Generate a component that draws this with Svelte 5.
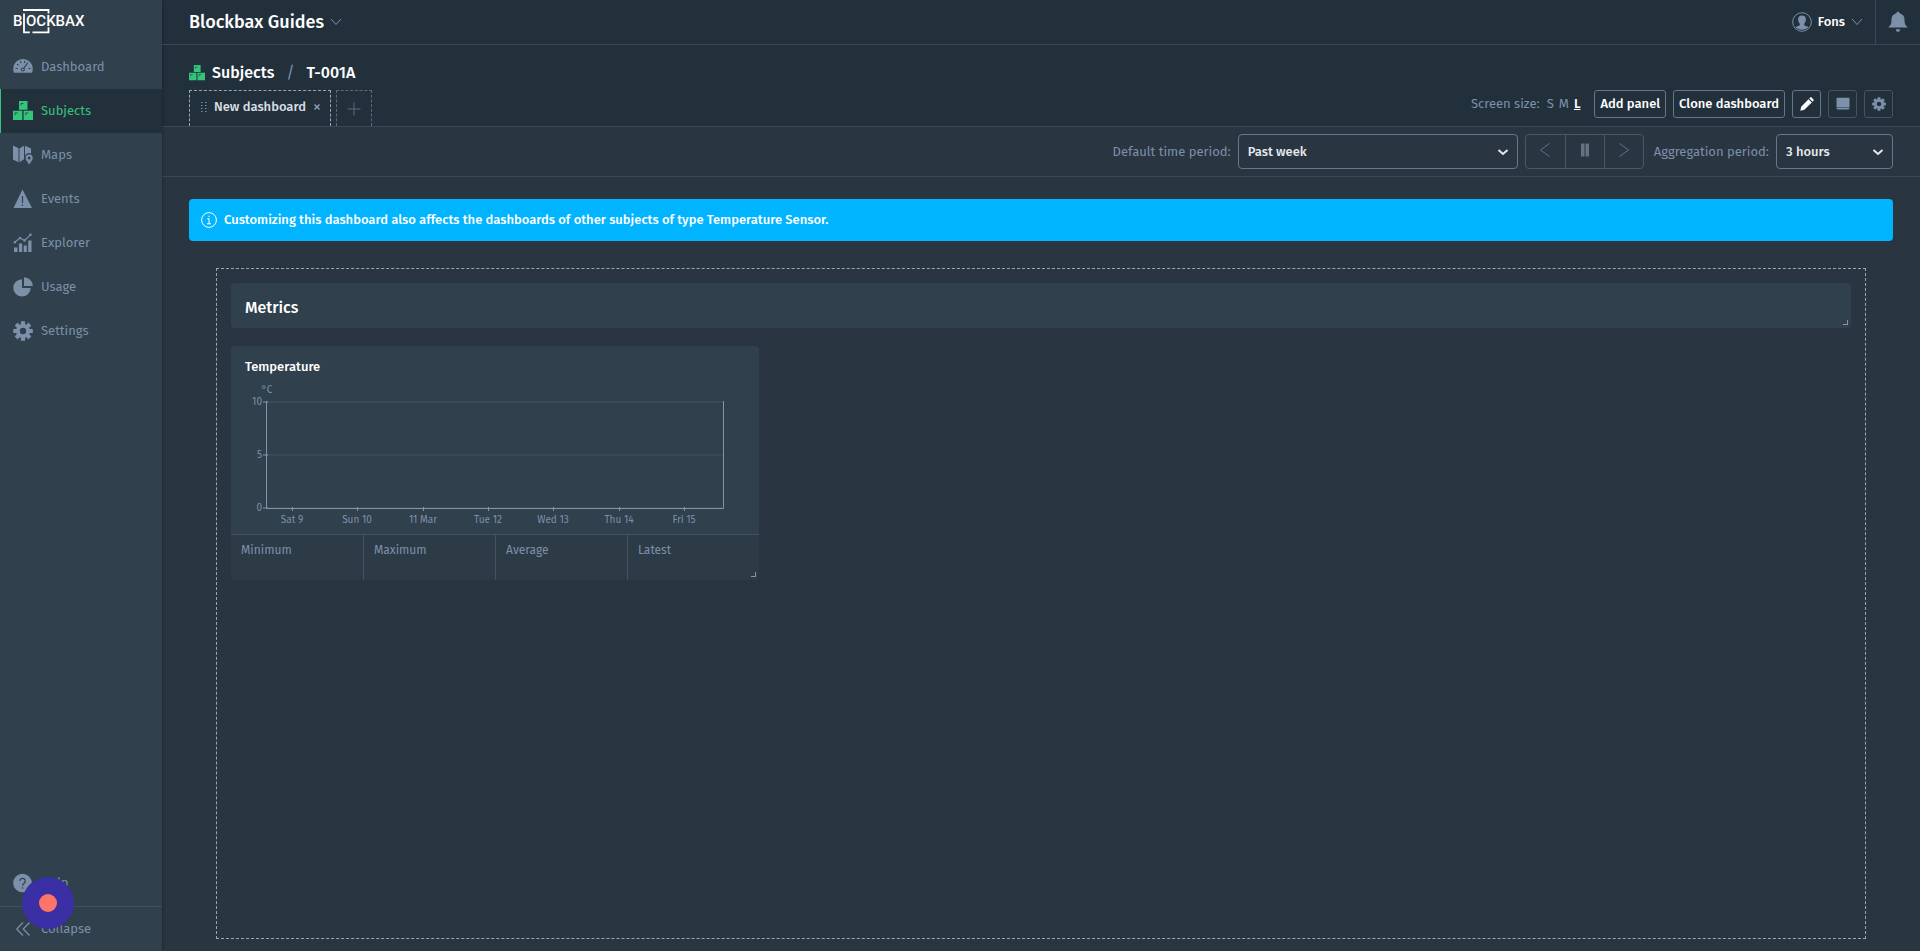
<script>
  const nav = [
    { id: 'dashboard', label: 'Dashboard' },
    { id: 'subjects', label: 'Subjects' },
    { id: 'maps', label: 'Maps' },
    { id: 'events', label: 'Events' },
    { id: 'explorer', label: 'Explorer' },
    { id: 'usage', label: 'Usage' },
    { id: 'settings', label: 'Settings' }
  ];
  const sizes = ['S', 'M', 'L'];
  const stats = ['Minimum', 'Maximum', 'Average', 'Latest'];
  const days = ['Sat 9', 'Sun 10', '11 Mar', 'Tue 12', 'Wed 13', 'Thu 14', 'Fri 15'];
  const levels = [10, 5, 0];

  let active = $state('subjects');
  let size = $state('L');

  const dayX = (i) => Math.round(61 + i * 65.3);
  const levelY = (v) => 127 - v * 10.6;
</script>

{#snippet icon(name)}
  <svg class="icon" viewBox="0 0 20 20" aria-hidden="true">
    {#if name === 'dashboard'}
      <path fill="currentColor" d="M10 2A9.800 9.800 0 0 0 .2 11.800c0 1.400.2 2.700.7 4h18.200c.5-1.300.7-2.600.7-4A9.800 9.800 0 0 0 10 2z" />
      <path d="M2.600 11.500h2M4 7.300l1.600 1M7.300 4.300l.8 1.700M11.800 4l-.4 1.800M17.500 11.500h-2M14.800 5.600L10.300 12" fill="none" stroke="#30404c" stroke-width="1.100" />
      <circle cx="9.800" cy="12.500" r="2" fill="#30404c" />
      <circle cx="9.800" cy="12.500" r="1" fill="currentColor" />
    {:else if name === 'subjects'}
      <path fill="currentColor" d="M6 0h8.500v8.800H6zM0 9.800h9.300V19H0zM10.600 9.800H20V19h-9.400z" />
      <path d="M8 4.500V2.500h2.500M2 14.200v-2.300h2.700M12.700 14.200v-2.300h2.700" fill="none" stroke="#22303c" stroke-width="1" opacity=".7" />
    {:else if name === 'maps'}
      <path fill="currentColor" d="M0 .5l5.500 2.800v14L0 14.500zM6.500 3.500L11 .7v13.600l-4.500 2.900zM12 .7L18 3.500v5.200a4 4 0 0 0-5.600 5.300l-.4-.2z" />
      <path fill="currentColor" fill-rule="evenodd" d="M16.200 9.500a3.500 3.500 0 0 0-3.500 3.500c0 2.500 3.500 6.300 3.500 6.300s3.500-3.800 3.500-6.300a3.500 3.500 0 0 0-3.500-3.500zm0 2a1.500 1.500 0 1 1 0 3 1.500 1.500 0 0 1 0-3z" />
    {:else if name === 'events'}
      <path fill="currentColor" d="M9.500 .5L19 19H.5z" />
      <path d="M9.500 7v7M9.500 15.500v1.600" stroke="#30404c" stroke-width="1.200" />
    {:else if name === 'explorer'}
      <path fill="currentColor" d="M1 14.500h3.500V19H1zM6 10.500h3.200V19H6zM10.700 12.500h3.100V19h-3.100zM15.200 7.500h3.300V19h-3.300z" />
      <path d="M1.500 9.500L7 5l4.500 2.500L17.500 1.800" fill="none" stroke="currentColor" stroke-width="1.100" />
      <circle cx="1.800" cy="9.300" r="1.200" fill="currentColor" />
      <circle cx="7" cy="5" r="1.200" fill="currentColor" />
      <circle cx="11.500" cy="7.500" r="1.200" fill="currentColor" />
      <circle cx="17.500" cy="1.800" r="1.300" fill="currentColor" />
    {:else if name === 'usage'}
      <path fill="currentColor" d="M9 2.200a8.700 8.700 0 1 0 8.700 8.700H9zM11 .3V9h8.700A8.700 8.700 0 0 0 11 .3z" />
    {:else if name === 'settings'}
      <g fill="currentColor">
        {#each [0, 45, 90, 135] as a}
          <rect x="7.900" y="0.200" width="4.200" height="19.600" rx=".6" transform="rotate({a} 10 10)" />
        {/each}
        <circle cx="10" cy="10" r="7" />
      </g>
      <circle class="hole" cx="10" cy="10" r="3.200" />
    {:else if name === 'help'}
      <circle cx="9.500" cy="10" r="9.300" fill="currentColor" />
      <path d="M6.800 8a2.700 2.700 0 1 1 4.300 2.200c-1 .7-1.500 1.200-1.500 2.500M9.600 14.200v1.500" fill="none" stroke="#30404c" stroke-width="1.200" />
    {:else if name === 'collapse'}
      <path d="M10 3.500L3.700 10l6.300 6.500M16.500 3.500L10.200 10l6.300 6.500" fill="none" stroke="currentColor" stroke-width="1.200" />
    {/if}
  </svg>
{/snippet}

{#snippet chevron(bold)}
  <svg class="chevron" class:bold viewBox="0 0 12 12" aria-hidden="true">
    <path d={bold ? 'M1.500 4L6 8l4.500-4' : 'M1 3l5 5.500L11 3'} fill="none" stroke="currentColor" />
  </svg>
{/snippet}

<div class="app">
  <aside class="sidebar">
    <a class="logo" href="#home" aria-label="Blockbax">
      <svg viewBox="0 0 80 28" aria-hidden="true">
        <text x="0" y="18">B</text>
        <text x="13" y="18">OCKBAX</text>
        <path d="M10 2h25.500v3.500M11 5.500v18.800h5.800M19.500 24.300h16v-5" fill="none" stroke="#fff" stroke-width="1.800" />
      </svg>
    </a>
    <nav>
      {#each nav as item}
        <a href="#{item.id}" class="item" class:active={active === item.id} onclick={() => (active = item.id)}>
          {@render icon(item.id)}<span>{item.label}</span>
        </a>
      {/each}
    </nav>
    <div class="foot">
      <a href="#help" class="item help">{@render icon('help')}<span>Help</span></a>
      <button class="item collapse">{@render icon('collapse')}<span>Collapse</span></button>
      <button class="recorder" aria-label="Record"><span></span></button>
    </div>
  </aside>

  <div class="page">
    <header class="top">
      <button class="project">Blockbax Guides {@render chevron(false)}</button>
      <button class="user">
        <svg class="avatar" viewBox="0 0 20 20" aria-hidden="true">
          <circle cx="10" cy="10" r="9.300" fill="none" stroke="currentColor" />
          <path fill="currentColor" d="M10 3.500c2.700 0 4 1.700 3.900 4.300-.1 1.700-.8 3-1.700 3.900v1.500c1.500.7 3.200 1 4.300 2a9.300 9.300 0 0 1-13 0c1.100-1 2.800-1.300 4.300-2v-1.500C6.900 10.800 6.200 9.500 6.100 7.800 6 5.200 7.300 3.500 10 3.500z" />
        </svg>
        Fons {@render chevron(false)}
      </button>
      <button class="bell" aria-label="Notifications">
        <svg viewBox="0 0 20 22" aria-hidden="true">
          <path fill="currentColor" d="M10 .8c.9 0 1.500.5 1.500 1.400C14.800 3 16.500 5.400 16.500 8.500c0 4.500.8 6 2.900 7.200v.8H.6v-.8c2.100-1.200 2.900-2.700 2.900-7.200 0-3.100 1.700-5.500 5-6.300C8.500 1.300 9.100.8 10 .8zM7.900 18.200h4.200c0 1.600-.8 2.600-2.100 2.600s-2.100-1-2.100-2.600z" />
        </svg>
      </button>
    </header>

    <div class="heading">
      <div class="titles">
        <div class="crumbs">
          <span class="cubes">{@render icon('subjects')}</span>
          <a href="#subjects">Subjects</a>
          <span class="slash">/</span>
          <h1>T-001A</h1>
        </div>
        <div class="tabs">
          <div class="tab">
            <svg class="grip" viewBox="0 0 6 10" aria-hidden="true">
              <path d="M0 .5h1.500M4 .5h1.500M0 3.500h1.500M4 3.500h1.500M0 6.500h1.500M4 6.500h1.500M0 9.500h1.500M4 9.500h1.500" stroke="currentColor" />
            </svg>
            <span>New dashboard</span>
            <button aria-label="Remove dashboard">
              <svg viewBox="0 0 8 8" aria-hidden="true"><path d="M1.500 1.500l5 5M6.500 1.500l-5 5" stroke="currentColor" stroke-width="1.200" /></svg>
            </button>
          </div>
          <button class="tab add" aria-label="Add dashboard">
            <svg viewBox="0 0 14 14" aria-hidden="true"><path d="M7 .5v13M.5 7h13" stroke="currentColor" /></svg>
          </button>
        </div>
      </div>
      <div class="actions">
        <span class="muted">Screen size:</span>
        <div class="sizes">
          {#each sizes as s}
            <button class:on={size === s} onclick={() => (size = s)}>{s}</button>
          {/each}
        </div>
        <button class="btn">Add panel</button>
        <button class="btn">Clone dashboard</button>
        <div class="tools">
          <button class="btn square" aria-label="Edit">
            <svg viewBox="0 0 14 14" aria-hidden="true"><path fill="currentColor" d="M.3 13.700l.9-4L8.500 2.200l3.300 3.300-7.500 7.300zM9.300 1.400l.6-.6c.6-.6 1.300-.6 1.900 0l1.400 1.400c.6.6.6 1.300 0 1.900l-.6.600z" /></svg>
          </button>
          <button class="btn square dim" aria-label="Full screen">
            <svg viewBox="0 0 14 14" aria-hidden="true"><path fill="currentColor" d="M1.500.8h11c.6 0 1 .4 1 1v8.200H.5V1.800c0-.6.4-1 1-1zM.5 10.400h13c0 1.500-.6 1.900-1.500 2.200H2c-.9-.3-1.500-.7-1.500-2.200z" /></svg>
          </button>
          <button class="btn square dim" aria-label="Dashboard settings">{@render icon('settings')}</button>
        </div>
      </div>
    </div>

    <div class="toolbar">
      <label for="period">Default time period:</label>
      <div class="select wide">
        <select id="period"><option>Past week</option><option>Past day</option></select>
        {@render chevron(true)}
      </div>
      <div class="stepper">
        <button aria-label="Previous"><svg viewBox="0 0 14 14"><path d="M11.500.5L2.500 7l9 6.500" fill="none" stroke="currentColor" /></svg></button>
        <button aria-label="Pause"><svg viewBox="0 0 14 14"><path d="M3 .5h3.500v13H3zM7.500.5H11v13H7.500z" fill="currentColor" /></svg></button>
        <button aria-label="Next"><svg viewBox="0 0 14 14"><path d="M2.500.5l9 6.500-9 6.500" fill="none" stroke="currentColor" /></svg></button>
      </div>
      <label for="aggregation">Aggregation period:</label>
      <div class="select">
        <select id="aggregation"><option>3 hours</option><option>1 hour</option></select>
        {@render chevron(true)}
      </div>
    </div>

    <main>
      <div class="notice">
        <svg viewBox="0 0 16 16" aria-hidden="true">
          <circle cx="8" cy="8" r="7.400" fill="none" stroke="currentColor" />
          <path d="M6.300 6.700H8v5M6 11.800h4M7.400 4.300h1.200" fill="none" stroke="currentColor" />
        </svg>
        Customizing this dashboard also affects the dashboards of other subjects of type Temperature Sensor.
      </div>

      <div class="board">
        <section class="panel header">
          <h2>Metrics</h2>
          <span class="resize"></span>
        </section>
        <section class="panel">
          <h3>Temperature</h3>
          <svg class="chart" viewBox="0 0 528 153" role="img" aria-label="Temperature in °C">
            <text x="36" y="12" text-anchor="middle">°C</text>
            {#each levels as v}
              <path class="grid" d="M36 {levelY(v)}H492" />
              <path class="axis" d="M32 {levelY(v)}H37" />
              <text x="31" y={levelY(v) + 3} text-anchor="end">{v}</text>
            {/each}
            <path class="axis" d="M35.500 20V127.500H492.500V20" />
            {#each days as d, i}
              <path class="axis" d="M{dayX(i)}.5 126V130" />
              <text x={dayX(i)} y="142" text-anchor="middle">{d}</text>
            {/each}
          </svg>
          <div class="stats">
            {#each stats as s}<div>{s}</div>{/each}
          </div>
          <span class="resize"></span>
        </section>
      </div>
    </main>
  </div>
</div>

<style>
  :global(body) {
    background: #293541;
  }
  .app {
    display: flex;
    min-height: 100vh;
    font: 13px/20px 'Fira Sans', Roboto, 'Noto Sans', sans-serif;
    color: #fff;
    --muted: #7d90aa;
    --line: #3a4956;
    --border: #687685;
  }
  .app *,
  .app {
    box-sizing: border-box;
  }
  button,
  select {
    font: inherit;
    color: inherit;
    background: none;
    border: 0;
    padding: 0;
    margin: 0;
    cursor: pointer;
  }
  a {
    color: inherit;
    text-decoration: none;
  }
  h1,
  h2,
  h3 {
    margin: 0;
    font-weight: 500;
  }
  svg {
    display: block;
    flex: none;
  }
  .hole {
    fill: #30404c;
  }

  .sidebar {
    flex: none;
    width: 162px;
    display: flex;
    flex-direction: column;
    background: #30404c;
    box-shadow: 0 0 3px rgba(0, 0, 0, 0.4);
    z-index: 1;
  }
  .logo {
    height: 45px;
    padding: 8px 13px;
  }
  .logo svg {
    width: 80px;
    height: 28px;
  }
  .logo text {
    fill: #fff;
    font: 500 15px Roboto, sans-serif;
  }
  .item {
    display: flex;
    align-items: center;
    gap: 8px;
    width: 100%;
    height: 44px;
    padding-left: 13px;
    color: var(--muted);
  }
  .item .icon {
    width: 20px;
    height: 20px;
  }
  .item.active {
    color: #34c47c;
    background: #22303c;
    box-shadow: inset 1px 0 #34c47c;
  }
  .foot {
    position: relative;
    margin-top: auto;
  }
  .help {
    padding-bottom: 3px;
  }
  .collapse {
    height: 45px;
    border-top: 1px solid #415160;
  }
  .recorder {
    position: absolute;
    left: 22px;
    bottom: 22px;
    display: grid;
    place-items: center;
    width: 52px;
    height: 52px;
    border-radius: 50%;
    background: #3a2fa5;
  }
  .recorder span {
    width: 18px;
    height: 18px;
    border-radius: 50%;
    background: #ff7468;
  }

  .page {
    flex: 1;
    min-width: 0;
    display: flex;
    flex-direction: column;
  }
  .top {
    display: flex;
    align-items: center;
    height: 45px;
    padding-left: 27px;
    background: #22303c;
    border-bottom: 1px solid var(--line);
  }
  .project {
    display: flex;
    align-items: center;
    gap: 6px;
    margin-right: auto;
    font-size: 18px;
    font-weight: 500;
  }
  .chevron {
    width: 12px;
    height: 12px;
    color: var(--muted);
  }
  .chevron.bold {
    color: #e4e8ec;
    stroke-width: 2;
  }
  .user {
    display: flex;
    align-items: center;
    gap: 6px;
    margin-right: 12px;
    font-weight: 500;
  }
  .avatar {
    width: 20px;
    height: 20px;
    color: var(--muted);
  }
  .bell {
    display: grid;
    place-items: center;
    width: 45px;
    height: 44px;
    border-left: 1px solid var(--line);
    color: var(--muted);
  }
  .bell svg {
    width: 20px;
    height: 22px;
  }

  .heading {
    display: flex;
    align-items: flex-end;
    justify-content: space-between;
    height: 82px;
    padding: 0 27px;
    background: #22303c;
    border-bottom: 1px solid var(--line);
  }
  .crumbs {
    display: flex;
    align-items: center;
    gap: 7px;
    padding-bottom: 7px;
    font-size: 16px;
    font-weight: 500;
  }
  .cubes {
    color: #34c47c;
  }
  .cubes .icon {
    width: 16px;
    height: 16px;
  }
  .crumbs h1 {
    font-size: 16px;
  }
  .slash {
    padding: 0 5px;
    color: var(--muted);
    font-weight: 400;
  }
  .tabs {
    display: flex;
    gap: 5px;
  }
  .tab {
    display: flex;
    align-items: center;
    gap: 7px;
    height: 36px;
    padding: 0 9px 3px 11px;
    border: 1px dashed #9aa6b3;
    border-bottom: 0;
    color: #d9dfe5;
    font-weight: 500;
  }
  .grip {
    width: 6px;
    height: 10px;
    color: var(--muted);
  }
  .tab button svg {
    width: 8px;
    height: 8px;
    color: #9aa8b8;
  }
  .tab.add {
    width: 36px;
    padding: 0;
    justify-content: center;
    border-color: #5c6977;
    color: #5c6977;
  }
  .add svg {
    width: 14px;
    height: 14px;
  }

  .actions {
    display: flex;
    align-items: center;
    gap: 7px;
    padding-bottom: 8px;
  }
  .muted,
  label {
    color: var(--muted);
  }
  .sizes {
    display: flex;
    gap: 5px;
    margin-right: 7px;
    color: var(--muted);
  }
  .sizes .on {
    color: #fff;
    text-decoration: underline;
    font-weight: 500;
  }
  .btn {
    height: 28px;
    padding: 0 5px;
    border: 1px solid var(--border);
    border-radius: 3px;
    font-weight: 500;
  }
  .tools {
    display: flex;
    gap: 7px;
  }
  .square {
    display: grid;
    place-items: center;
    width: 29px;
    padding: 0;
  }
  .square svg {
    width: 14px;
    height: 14px;
  }
  .square .hole {
    fill: #22303c;
  }
  .dim {
    color: var(--muted);
    border-color: #465361;
  }

  .toolbar {
    display: flex;
    align-items: center;
    justify-content: flex-end;
    gap: 7px;
    height: 50px;
    padding: 0 27px;
    border-bottom: 1px solid var(--line);
  }
  .select {
    position: relative;
    width: 117px;
  }
  .wide {
    width: 280px;
  }
  .select select {
    appearance: none;
    width: 100%;
    height: 35px;
    padding: 0 9px;
    border: 1px solid var(--border);
    border-radius: 4px;
    color: #e4e8ec;
    font-weight: 500;
  }
  .select .chevron {
    position: absolute;
    right: 9px;
    top: 12px;
    pointer-events: none;
  }
  .stepper {
    display: flex;
    margin-right: 3px;
    border: 1px solid #4a5765;
    border-radius: 4px;
    color: #647282;
  }
  .stepper button {
    display: grid;
    place-items: center;
    width: 39px;
    height: 33px;
    padding-bottom: 3px;
  }
  .stepper button + button {
    border-left: 1px solid #4a5765;
  }
  .stepper svg {
    width: 14px;
    height: 14px;
  }

  main {
    flex: 1;
    display: flex;
    flex-direction: column;
    padding: 22px 27px 12px;
  }
  .notice {
    display: flex;
    align-items: center;
    gap: 7px;
    height: 42px;
    padding: 0 12px;
    border-radius: 4px;
    background: #00b4ff;
    font-weight: 500;
  }
  .notice svg {
    width: 16px;
    height: 16px;
  }
  .board {
    flex: 1;
    display: grid;
    grid-template-columns: repeat(3, minmax(0, 1fr));
    gap: 18px;
    align-content: start;
    margin: 27px 27px 0;
    padding: 14px;
    border: 1px dashed #9aa6b3;
  }
  .panel {
    position: relative;
    overflow: hidden;
    border-radius: 4px;
    background: #30404c;
  }
  .header {
    grid-column: 1 / -1;
    height: 45px;
    padding: 15px 14px;
  }
  h2 {
    font-size: 16px;
  }
  h3 {
    padding: 11px 14px 4px;
    font-size: 13px;
  }
  .chart {
    width: 100%;
  }
  .chart text {
    fill: var(--muted);
    font-size: 10px;
  }
  .grid {
    stroke: #445260;
  }
  .axis {
    fill: none;
    stroke: #8593a5;
  }
  .stats {
    display: grid;
    grid-template-columns: repeat(4, 1fr);
    border-top: 1px solid #435260;
    background: #2d3b47;
    color: var(--muted);
    font-size: 12px;
  }
  .stats div {
    height: 45px;
    padding: 5px 10px;
  }
  .stats div + div {
    border-left: 1px solid #435260;
  }
  .resize {
    position: absolute;
    right: 3px;
    bottom: 3px;
    width: 5px;
    height: 5px;
    border: solid #8593a5;
    border-width: 0 1px 1px 0;
  }
</style>
